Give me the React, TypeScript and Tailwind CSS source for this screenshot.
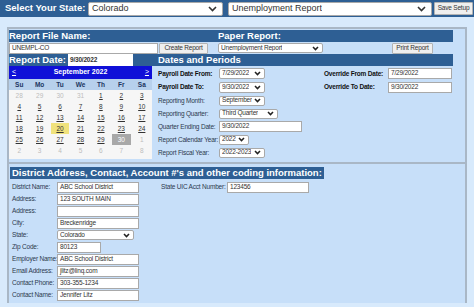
import React from "react";

function Chevron({ big = false }: { big?: boolean }) {
  return big ? (
    <svg width="9" height="6" viewBox="0 0 9 6" className="shrink-0">
      <path d="M1 1 L4.5 4.5 L8 1" fill="none" stroke="#333" strokeWidth="1.6" />
    </svg>
  ) : (
    <svg width="7" height="5" viewBox="0 0 7 5" className="shrink-0">
      <path d="M1 1 L3.5 3.6 L6 1" fill="none" stroke="#222" strokeWidth="1.5" />
    </svg>
  );
}

function Sel({ className, children, big = false }: { className: string; children?: React.ReactNode; big?: boolean }) {
  return (
    <div
      className={
        "flex items-center justify-between bg-white border border-[#a9a9a9] rounded-[2px] text-[#333] " +
        (big ? "pl-[3px] pr-[5px] text-[9px]" : "pl-[2px] pr-[3px] text-[6.5px] tracking-[-0.2px]") +
        " " +
        className
      }
    >
      <span className="truncate leading-none">{children}</span>
      <Chevron big={big} />
    </div>
  );
}

function Field({ className, children }: { className: string; children?: React.ReactNode }) {
  return (
    <div className={"flex items-center bg-white border border-[#a9a9a9] pl-[2px] text-[6.5px] tracking-[-0.2px] leading-none text-[#333] " + className}>
      {children}
    </div>
  );
}

function Btn({ className, children }: { className: string; children: React.ReactNode }) {
  return (
    <div className={"flex items-center justify-center bg-[#efefef] border border-[#b3b3b3] rounded-[1px] text-[6.5px] tracking-[-0.2px] leading-none text-[#333] " + className}>
      {children}
    </div>
  );
}

const weeks: { d: string; muted?: boolean }[][] = [];
(() => {
  const cells: { d: string; muted?: boolean }[] = [];
  ["28", "29", "30", "31"].forEach((d) => cells.push({ d, muted: true }));
  for (let i = 1; i <= 30; i++) cells.push({ d: String(i) });
  for (let i = 1; cells.length < 42; i++) cells.push({ d: String(i), muted: true });
  for (let w = 0; w < 6; w++) weeks.push(cells.slice(w * 7, w * 7 + 7));
})();

function Calendar() {
  return (
    <div className="w-[143px] bg-[#f6f6f6]">
      <div className="h-[13px] bg-[#1010d8] flex items-center justify-between px-[3px] text-white text-[7px]">
        <span className="underline">&lt;</span>
        <span className="font-bold">September 2022</span>
        <span className="underline">&gt;</span>
      </div>
      <div className="h-[11px] bg-[#b7d0ec] grid grid-cols-7 items-center text-center text-[6.5px] font-bold text-[#1c3561]">
        {["Su", "Mo", "Tu", "We", "Th", "Fr", "Sa"].map((d) => (
          <span key={d}>{d}</span>
        ))}
      </div>
      {weeks.map((wk, i) => (
        <div key={i} className="h-[11px] grid grid-cols-7 items-stretch text-center text-[6.5px]">
          {wk.map((c, j) => {
            const today = !c.muted && c.d === "20";
            const sel = !c.muted && c.d === "30";
            return (
              <div key={j} className="flex items-center justify-center px-[1px]">
                <span
                  className={
                    "w-full h-full flex items-center justify-center " +
                    (today
                      ? "bg-[#f0e27c] text-[#333] underline"
                      : sel
                      ? "bg-[#a8a8a8] text-white"
                      : c.muted
                      ? "text-[#bdbdbd]"
                      : "text-[#333] underline")
                  }
                >
                  {c.d}
                </span>
              </div>
            );
          })}
        </div>
      ))}
    </div>
  );
}

function DateRow({ h, label, bold = false, children }: { h: string; label: string; bold?: boolean; children: React.ReactNode }) {
  return (
    <div className={"flex items-center " + h}>
      <span className={"w-[61px] shrink-0 text-[6.5px] tracking-[-0.2px] whitespace-nowrap " + (bold ? "font-bold text-[#111]" : "text-[#2d3a4e]")}>{label}</span>
      {children}
    </div>
  );
}

function AddrRow({ label, children }: { label: string; children: React.ReactNode }) {
  return (
    <div className="flex items-center h-[12px]">
      <span className="w-[45px] shrink-0 text-[6.5px] tracking-[-0.2px] text-[#2d3a4e] whitespace-nowrap">{label}</span>
      {children}
    </div>
  );
}

export default function App() {
  return (
    <div className="w-[474px] h-[307px] overflow-hidden bg-[#d8eafc] font-['Liberation_Sans',Arial,sans-serif] text-[#222]">
      {/* top bar */}
      <div className="h-[17px] bg-[#2e5f94] flex items-center pl-[5px]">
        <span className="w-[83px] shrink-0 text-white font-bold text-[9.5px] whitespace-nowrap">Select Your State:</span>
        <Sel big className="w-[135px] h-[14px]">Colorado</Sel>
        <Sel big className="ml-[5px] w-[204px] h-[14px]">Unemployment Report</Sel>
        <Btn className="ml-[2px] w-[39px] h-[13px]">Save Setup</Btn>
      </div>

      {/* report panel */}
      <div className="mt-[10px] ml-[7px] w-[460px] h-[135px] bg-[#c7dff9] border-t-2 border-x-2 border-[#a9b7c6] pt-[1px]">
        <div className="w-[444px]">
          <div className="h-[12px] bg-[#2e5f94] flex items-center text-white font-bold text-[9.5px] whitespace-nowrap">
            <span className="w-[209px]">Report File Name:</span>
            <span>Paper Report:</span>
          </div>
          <div className="h-[12px] flex items-center">
            <div className="w-[209px] flex items-center">
              <Field className="w-[149px] h-[11px]">UNEMPL-CO</Field>
              <Btn className="ml-[1px] w-[49px] h-[11px]">Create Report</Btn>
            </div>
            <Sel className="w-[105px] h-[10px]">Unemployment Report</Sel>
            <Btn className="ml-[69px] w-[41px] h-[11px]">Print Report</Btn>
          </div>
          <div className="h-[12px] bg-[#2e5f94] flex items-center text-white font-bold text-[9.5px] whitespace-nowrap">
            <div className="w-[143px] flex items-center h-full">
              <span className="w-[59px]">Report Date:</span>
              <Field className="w-[65px] h-full border-0">9/30/2022</Field>
            </div>
            <span className="pl-[6px]">Dates and Periods</span>
          </div>
          <div className="flex">
            <Calendar />
            <div className="pl-[6px] pt-[1px] flex-1">
              <div className="flex items-center h-[13px]">
                <div className="w-[166px]">
                  <DateRow h="h-[13px]" label="Payroll Date From:" bold>
                    <Sel className="w-[46px] h-[11px]">7/29/2022</Sel>
                  </DateRow>
                </div>
                <span className="w-[64px] text-[6.5px] tracking-[-0.2px] font-bold text-[#111] whitespace-nowrap">Override From Date:</span>
                <Field className="w-[64px] h-[11px]">7/29/2022</Field>
              </div>
              <div className="flex items-center h-[14px]">
                <div className="w-[166px]">
                  <DateRow h="h-[14px]" label="Payroll Date To:" bold>
                    <Sel className="w-[46px] h-[11px]">9/30/2022</Sel>
                  </DateRow>
                </div>
                <span className="w-[64px] text-[6.5px] tracking-[-0.2px] font-bold text-[#111] whitespace-nowrap">Override To Date:</span>
                <Field className="w-[64px] h-[11px]">9/30/2022</Field>
              </div>
              <DateRow h="h-[13px]" label="Reporting Month:">
                <Sel className="w-[46px] h-[10px]">September</Sel>
              </DateRow>
              <DateRow h="h-[13px]" label="Reporting Quarter:">
                <Sel className="w-[59px] h-[10px]">Third Quarter</Sel>
              </DateRow>
              <DateRow h="h-[13px]" label="Quarter Ending Date:">
                <Field className="w-[83px] h-[11px]">9/30/2022</Field>
              </DateRow>
              <DateRow h="h-[13px]" label="Report Calendar Year:">
                <Sel className="w-[30px] h-[10px]">2022</Sel>
              </DateRow>
              <DateRow h="h-[13px]" label="Report Fiscal Year:">
                <Sel className="w-[46px] h-[10px]">2022-2023</Sel>
              </DateRow>
            </div>
          </div>
        </div>
      </div>

      {/* address panel */}
      <div className="ml-[7px] w-[460px] h-[141px] bg-[#c7dff9] border-t-2 border-x-2 border-[#a9b7c6] pt-[3px]">
        <div className="flex pl-[1px]">
          <div className="bg-[#2e5f94] px-[2px] h-[12px] flex items-center text-white font-bold text-[9.5px] whitespace-nowrap">
            District Address, Contact, Account #'s and other coding information:
          </div>
        </div>
        <div className="mt-[2px] pl-[3px]">
          <div className="flex items-center h-[12px]">
            <AddrRow label="District Name:">
              <Field className="w-[82px] h-[11px]">ABC School District</Field>
            </AddrRow>
            <span className="ml-[22px] w-[66px] text-[6.5px] tracking-[-0.2px] text-[#2d3a4e] whitespace-nowrap">State UIC Acct Number:</span>
            <Field className="w-[82px] h-[11px]">123456</Field>
          </div>
          <AddrRow label="Address:">
            <Field className="w-[82px] h-[11px]">123 SOUTH MAIN</Field>
          </AddrRow>
          <AddrRow label="Address:">
            <Field className="w-[82px] h-[11px]"></Field>
          </AddrRow>
          <AddrRow label="City:">
            <Field className="w-[82px] h-[11px]">Breckenridge</Field>
          </AddrRow>
          <AddrRow label="State:">
            <Sel className="w-[77px] h-[10px]">Colorado</Sel>
          </AddrRow>
          <AddrRow label="Zip Code:">
            <Field className="w-[44px] h-[11px]">80123</Field>
          </AddrRow>
          <AddrRow label="Employer Name:">
            <Field className="w-[82px] h-[11px]">ABC School District</Field>
          </AddrRow>
          <AddrRow label="Email Address:">
            <Field className="w-[82px] h-[11px]">jlitz@linq.com</Field>
          </AddrRow>
          <AddrRow label="Contact Phone:">
            <Field className="w-[82px] h-[11px]">303-355-1234</Field>
          </AddrRow>
          <AddrRow label="Contact Name:">
            <Field className="w-[82px] h-[11px]">Jennifer Litz</Field>
          </AddrRow>
        </div>
      </div>
    </div>
  );
}
